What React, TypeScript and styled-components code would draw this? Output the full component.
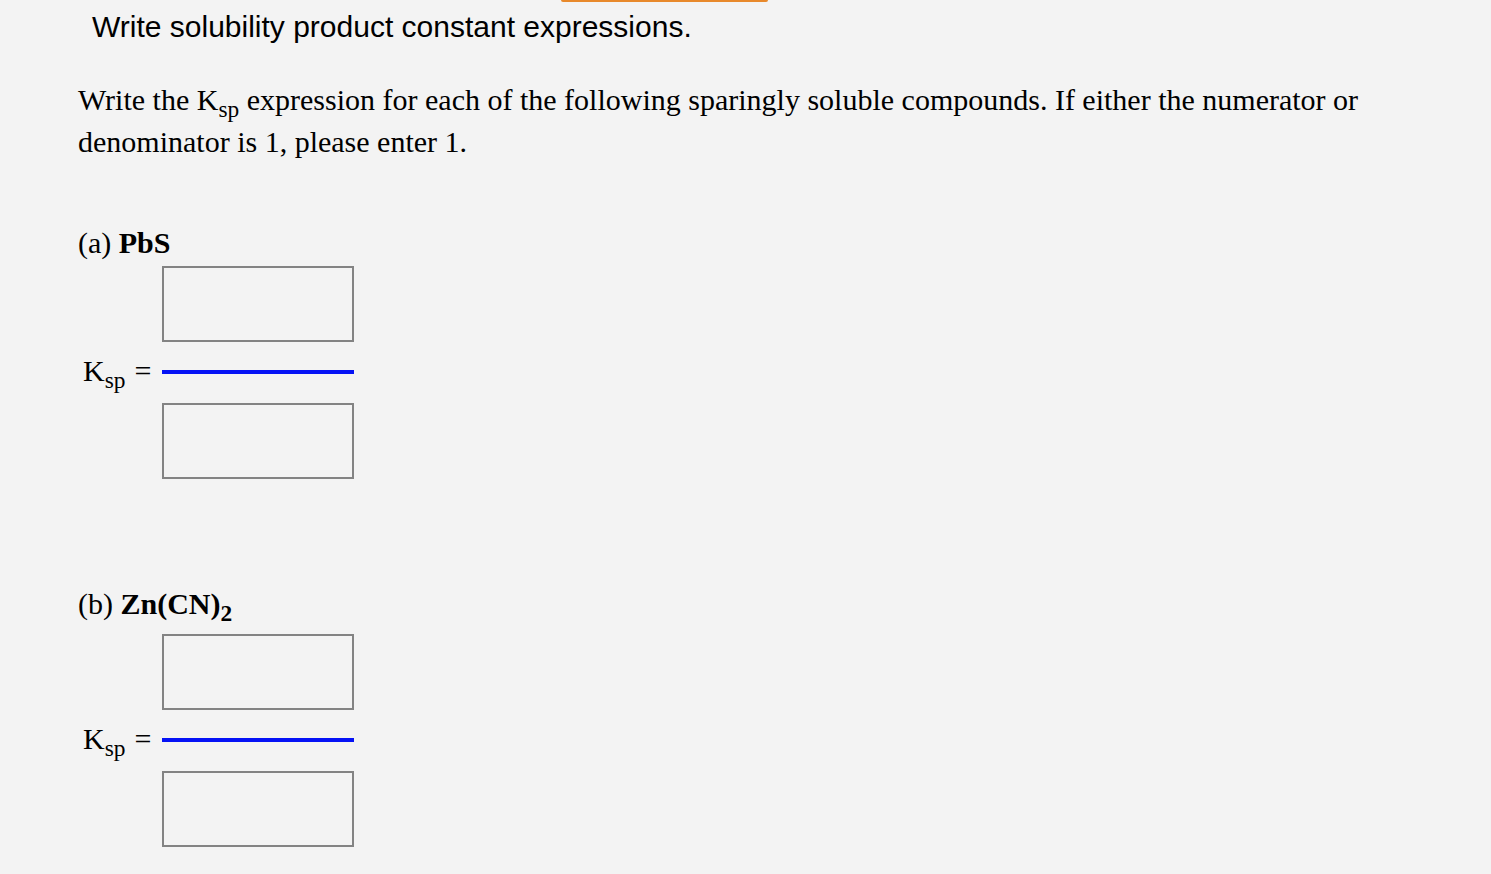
import React from "react";
import styled, { createGlobalStyle } from "styled-components";

const Global = createGlobalStyle`
  html, body { margin: 0; padding: 0; background: #f3f3f3; }
  body { font-family: "Liberation Serif", "Times New Roman", serif; color: #000; }
`;

const Page = styled.div`
  min-height: 874px;
  background: #f3f3f3;
  position: relative;
  padding: 0 0 0 78px;
  box-sizing: border-box;
`;

const TopAccent = styled.div`
  position: absolute;
  top: 0;
  left: 561px;
  width: 207px;
  height: 2px;
  background: #e8892b;
  border-radius: 0 0 2px 2px;
`;

const Title = styled.h1`
  margin: 0;
  padding: 10px 0 0 14px;
  font-family: "Liberation Sans", Arial, sans-serif;
  font-weight: 400;
  font-size: 30px;
  line-height: 34px;
`;

const Intro = styled.p`
  margin: 35px 0 0 0;
  font-size: 30px;
  line-height: 42px;
  max-width: 1330px;
`;

const Sub = styled.sub`
  font-size: 0.78em;
  vertical-align: -0.3em;
  line-height: 0;
`;

const Part = styled.section<{ $top: number; $labelGap: number }>`
  margin-top: ${(p) => p.$top}px;
  display: flex;
  flex-direction: column;
  gap: ${(p) => p.$labelGap}px;
`;

const PartLabel = styled.div`
  font-size: 30px;
  line-height: 32px;
  height: 32px;
`;

const Bold = styled.b`
  font-weight: 700;
`;

const Equation = styled.div`
  display: grid;
  grid-template-columns: 84px 192px;
  align-items: center;
`;

const KLabel = styled.div`
  font-size: 30px;
  line-height: 30px;
  padding-left: 5px;
  white-space: nowrap;
  margin-top: -4px;
`;

const Eq = styled.span`
  margin-left: 9px;
`;

const Fraction = styled.div`
  display: flex;
  flex-direction: column;
  align-items: stretch;
`;

const AnswerBox = styled.input`
  box-sizing: border-box;
  width: 192px;
  height: 76px;
  margin: 0;
  border: 2px solid #838383;
  background: #f3f3f3;
  outline: none;
  font-size: 20px;
  font-family: "Liberation Serif", serif;
`;

const Bar = styled.div`
  height: 4px;
  background: #0512f5;
  margin: 28px 0 29px 0;
`;

function KspFraction() {
  return (
    <Equation>
      <KLabel>
        K<Sub>sp</Sub>
        <Eq>=</Eq>
      </KLabel>
      <Fraction>
        <AnswerBox type="text" aria-label="numerator" />
        <Bar />
        <AnswerBox type="text" aria-label="denominator" />
      </Fraction>
    </Equation>
  );
}

export default function App() {
  return (
    <Page>
      <Global />
      <TopAccent />
      <Title>Write solubility product constant expressions.</Title>
      <Intro>
        Write the K<Sub>sp</Sub> expression for each of the following sparingly soluble
        compounds. If either the numerator or denominator is 1, please enter 1.
      </Intro>
      <Part $top={64} $labelGap={7}>
        <PartLabel>
          (a) <Bold>PbS</Bold>
        </PartLabel>
        <KspFraction />
      </Part>
      <Part $top={109} $labelGap={14}>
        <PartLabel>
          (b) <Bold>Zn(CN)<Sub>2</Sub></Bold>
        </PartLabel>
        <KspFraction />
      </Part>
    </Page>
  );
}
